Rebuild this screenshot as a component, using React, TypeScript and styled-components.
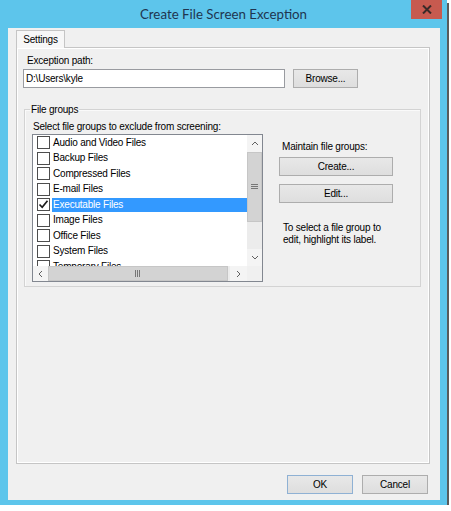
import React from 'react';
import styled, { createGlobalStyle } from 'styled-components';

const Global = createGlobalStyle`
  html, body { margin: 0; padding: 0; background: #ffffff; }
  body {
    font-family: "Liberation Sans", Arial, sans-serif;
    font-size: 10px;
    letter-spacing: -0.2px;
    color: #000;
  }
  * { box-sizing: border-box; }
`;

const Window = styled.div`
  width: 447px;
  height: 505px;
  background: #5dc5eb;
  box-shadow: 2px 3px 0 #5b5b5b;
  display: flex;
  flex-direction: column;
`;

const TitleBar = styled.div`
  position: relative;
  height: 28px;
  display: flex;
  align-items: center;
  justify-content: center;
  padding-bottom: 1px;
`;

const Title = styled.div`
  font-family: Lato, "Noto Sans", sans-serif;
  font-size: 13.3px;
  letter-spacing: 0;
  color: #1f3550;
`;

const CloseButton = styled.div`
  position: absolute;
  top: 0;
  right: 5px;
  width: 31px;
  height: 19px;
  background: #c75a4f;
  display: flex;
  align-items: center;
  justify-content: center;
`;

const Frame = styled.div`
  flex: 1;
  display: flex;
  padding: 0 7px 5px 8px;
`;

const Client = styled.div`
  flex: 1;
  background: #f0f0f0;
  display: flex;
  flex-direction: column;
  padding: 2px 10px 6px 8px;
`;

const TabStrip = styled.div`
  display: flex;
  height: 18px;
  position: relative;
  z-index: 1;
`;

const Tab = styled.div`
  width: 49px;
  height: 18px;
  border: 1px solid #c5c5c5;
  border-bottom: none;
  background: #f7f7f7;
  display: flex;
  align-items: center;
  justify-content: center;
  padding-bottom: 1px;
`;

const Panel = styled.div`
  flex: 1;
  margin-top: -1px;
  border: 1px solid #c5c5c5;
  box-shadow: inset 1px 1px 0 #ffffff, inset -1px -1px 0 #ffffff;
  background: #f0f0f0;
  display: flex;
  flex-direction: column;
  padding: 6px 0 0 6px;
`;

const FieldLabel = styled.div<{ $indent?: number }>`
  line-height: 13px;
  padding-left: ${p => p.$indent ?? 0}px;
`;

const PathRow = styled.div`
  display: flex;
  align-items: flex-start;
  margin-top: 2px;
`;

const TextInput = styled.div`
  width: 262px;
  height: 19px;
  background: #ffffff;
  border: 1px solid #999ba0;
  display: flex;
  align-items: center;
  padding-left: 2px;
`;

const Button = styled.div<{ $w: number; $default?: boolean }>`
  width: ${p => p.$w}px;
  height: 19px;
  border: 1px solid ${p => (p.$default ? '#8fb1d4' : '#adadad')};
  background: linear-gradient(#e8e8e8, #dedede);
  display: flex;
  align-items: center;
  justify-content: center;
  padding-bottom: 1px;
`;

const BrowseButton = styled(Button)`
  margin-left: 8px;
`;

const GroupBox = styled.fieldset`
  margin: 15px 8px 0 1px;
  padding: 4px 7px 4px 7px;
  border: 1px solid #d3d3d3;
  box-shadow: inset 1px 1px 0 #fafafa;
  min-inline-size: 0;
`;

const Legend = styled.legend`
  line-height: 13px;
  padding: 0 1px;
  margin-left: -2px;
`;

const GroupBody = styled.div`
  display: flex;
  align-items: flex-start;
  margin-top: 1px;
`;

const ListBox = styled.div`
  width: 231px;
  height: 148px;
  border: 1px solid #828790;
  background: #ffffff;
  display: grid;
  grid-template-columns: 214px 15px;
  grid-template-rows: 131px 15px;
`;

const Rows = styled.div`
  overflow: hidden;
  display: flex;
  flex-direction: column;
`;

const Row = styled.div`
  height: 15.5px;
  flex: none;
  display: flex;
  align-items: center;
  padding-left: 4px;
`;

const CheckBox = styled.div`
  width: 13px;
  height: 13px;
  border: 1px solid #4d4d4d;
  background: #ffffff;
  flex: none;
  display: flex;
  align-items: center;
  justify-content: center;
`;

const RowLabel = styled.div<{ $selected?: boolean }>`
  margin-left: 2px;
  flex: 1;
  height: 14px;
  line-height: 14px;
  padding-left: 1px;
  background: ${p => (p.$selected ? '#3399ff' : 'transparent')};
  color: ${p => (p.$selected ? '#ffffff' : '#000000')};
`;

const VScroll = styled.div`
  background: #f0f0f0;
  display: flex;
  flex-direction: column;
`;

const HScroll = styled.div`
  background: #f0f0f0;
  display: flex;
`;

const ArrowBox = styled.div<{ $w: number; $h: number }>`
  width: ${p => p.$w}px;
  height: ${p => p.$h}px;
  flex: none;
  display: flex;
  align-items: center;
  justify-content: center;
  background: #f4f4f4;
`;

const Thumb = styled.div<{ $w?: number; $h?: number }>`
  ${p => (p.$w ? `width: ${p.$w}px;` : '')}
  ${p => (p.$h ? `height: ${p.$h}px;` : '')}
  flex: none;
  background: #d3d3d3;
  border: 1px solid #c6c6c6;
  display: flex;
  align-items: center;
  justify-content: center;
`;

const Track = styled.div`
  flex: 1;
  background: #ececec;
`;

const Corner = styled.div`
  background: #f0f0f0;
`;

const SideColumn = styled.div`
  margin-left: 16px;
  width: 114px;
  padding-top: 6px;
  display: flex;
  flex-direction: column;
`;

const SideButton = styled(Button)<{ $gap: number }>`
  margin-top: ${p => p.$gap}px;
`;

const HelpText = styled.div`
  margin-top: 19px;
  padding-left: 4px;
  line-height: 12px;
`;

const Footer = styled.div`
  display: flex;
  justify-content: flex-end;
  gap: 9px;
  margin-top: 11px;
  padding-right: 2px;
`;

const Chevron = ({ dir }: { dir: 'up' | 'down' | 'left' | 'right' }) => {
  const paths: Record<string, string> = {
    up: 'M1 5 L4 2 L7 5',
    down: 'M1 2 L4 5 L7 2',
    left: 'M5 1 L2 4 L5 7',
    right: 'M2 1 L5 4 L2 7',
  };
  const horiz = dir === 'up' || dir === 'down';
  return (
    <svg width={horiz ? 8 : 7} height={horiz ? 7 : 8} viewBox={horiz ? '0 0 8 7' : '0 0 7 8'}>
      <path d={paths[dir]} fill="none" stroke="#606060" strokeWidth="1" />
    </svg>
  );
};

const GripV = () => (
  <svg width="7" height="6" viewBox="0 0 7 6">
    <path d="M0 0.5 H7 M0 2.5 H7 M0 4.5 H7" stroke="#777" strokeWidth="1" />
  </svg>
);

const GripH = () => (
  <svg width="6" height="7" viewBox="0 0 6 7">
    <path d="M0.5 0 V7 M2.5 0 V7 M4.5 0 V7" stroke="#777" strokeWidth="1" />
  </svg>
);

const items = [
  'Audio and Video Files',
  'Backup Files',
  'Compressed Files',
  'E-mail Files',
  'Executable Files',
  'Image Files',
  'Office Files',
  'System Files',
  'Temporary Files',
];

export default function App() {
  return (
    <>
      <Global />
      <Window>
        <TitleBar>
          <Title>Create File Screen Exception</Title>
          <CloseButton>
            <svg width="10" height="9" viewBox="0 0 10 9">
              <path d="M1 0.5 L9 8.5 M9 0.5 L1 8.5" stroke="#3a2a28" strokeWidth="2" />
            </svg>
          </CloseButton>
        </TitleBar>
        <Frame>
          <Client>
            <TabStrip>
              <Tab>Settings</Tab>
            </TabStrip>
            <Panel>
              <FieldLabel $indent={4}>Exception path:</FieldLabel>
              <PathRow>
                <TextInput>D:\Users\kyle</TextInput>
                <BrowseButton $w={65}>Browse...</BrowseButton>
              </PathRow>
              <GroupBox>
                <Legend>File groups</Legend>
                <FieldLabel $indent={1}>Select file groups to exclude from screening:</FieldLabel>
                <GroupBody>
                  <ListBox>
                    <Rows>
                      {items.map((name, i) => (
                        <Row key={name}>
                          <CheckBox>
                            {i === 4 && (
                              <svg width="11" height="11" viewBox="0 0 11 11">
                                <path d="M1.5 5.5 L4.2 8.3 L9.5 1.8" fill="none" stroke="#1a1a1a" strokeWidth="1.7" />
                              </svg>
                            )}
                          </CheckBox>
                          <RowLabel $selected={i === 4}>{name}</RowLabel>
                        </Row>
                      ))}
                    </Rows>
                    <VScroll>
                      <ArrowBox $w={15} $h={17}><Chevron dir="up" /></ArrowBox>
                      <Thumb $h={70}><GripV /></Thumb>
                      <Track />
                      <ArrowBox $w={15} $h={17}><Chevron dir="down" /></ArrowBox>
                    </VScroll>
                    <HScroll>
                      <ArrowBox $w={15} $h={15}><Chevron dir="left" /></ArrowBox>
                      <Thumb $w={180}><GripH /></Thumb>
                      <Track />
                      <ArrowBox $w={17} $h={15}><Chevron dir="right" /></ArrowBox>
                    </HScroll>
                    <Corner />
                  </ListBox>
                  <SideColumn>
                    <FieldLabel $indent={3}>Maintain file groups:</FieldLabel>
                    <SideButton $w={114} $gap={4}>Create...</SideButton>
                    <SideButton $w={114} $gap={8}>Edit...</SideButton>
                    <HelpText>
                      To select a file group to
                      <br />
                      edit, highlight its label.
                    </HelpText>
                  </SideColumn>
                </GroupBody>
              </GroupBox>
            </Panel>
            <Footer>
              <Button $w={66} $default>OK</Button>
              <Button $w={66}>Cancel</Button>
            </Footer>
          </Client>
        </Frame>
      </Window>
    </>
  );
}
